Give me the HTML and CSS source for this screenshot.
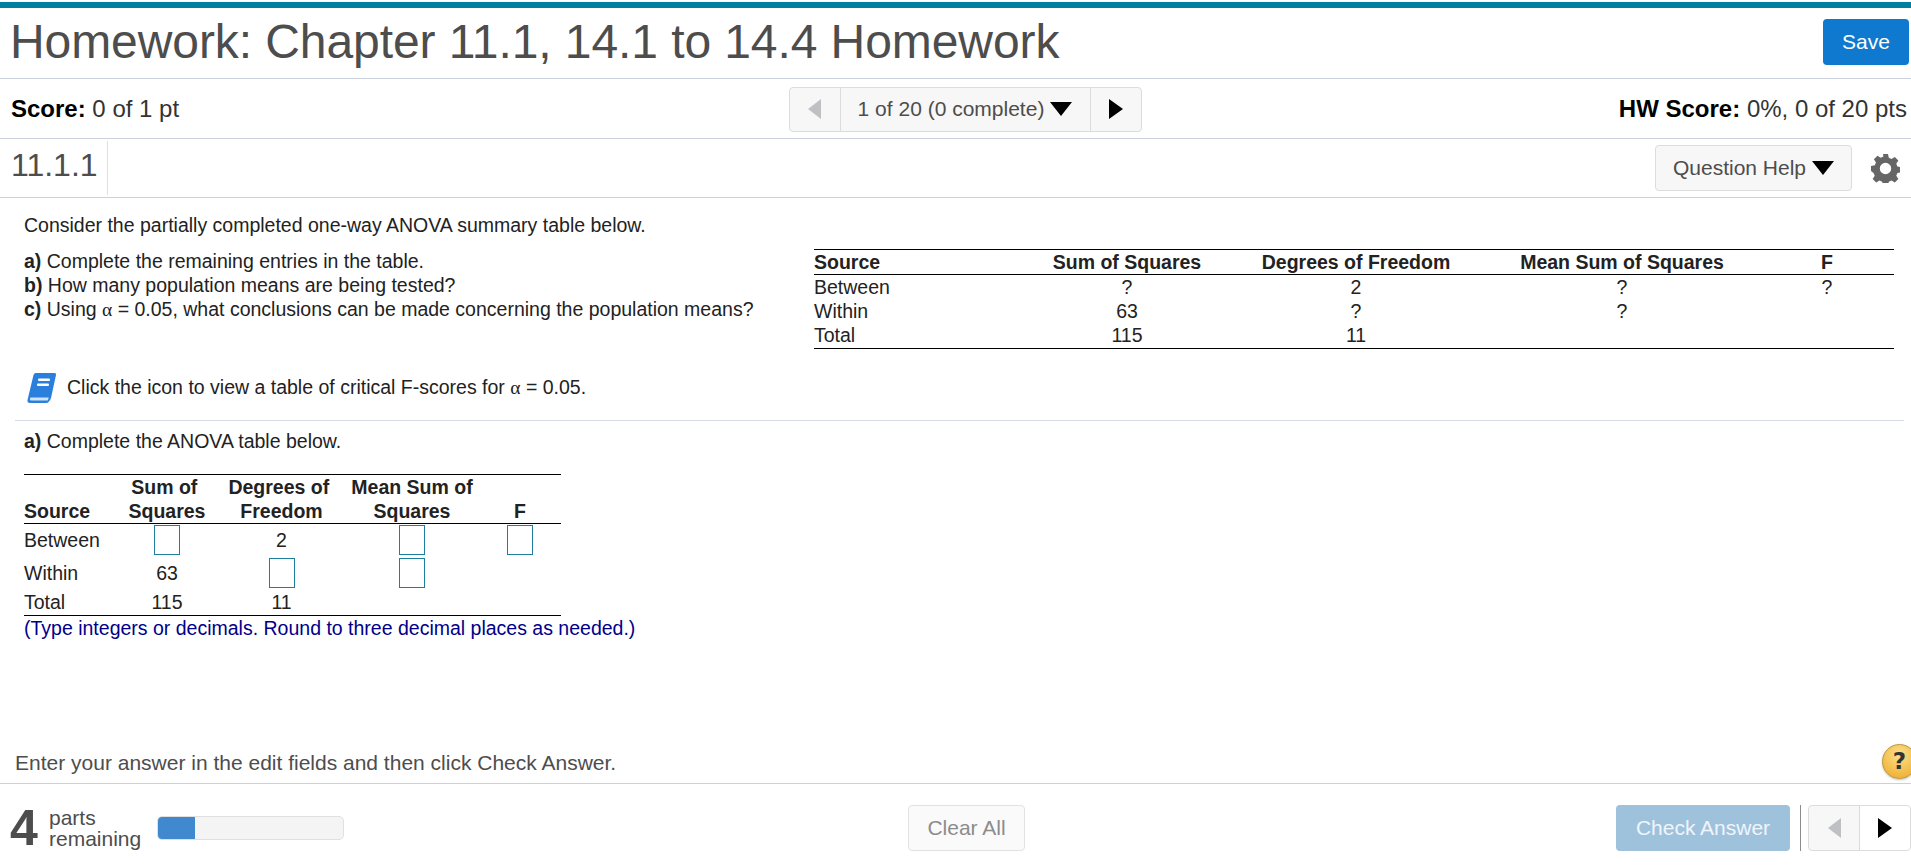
FILE: index.html
```html
<!DOCTYPE html>
<html lang="en">
<head>
<meta charset="utf-8">
<title>Homework</title>
<link rel="stylesheet" href="styles.css">
</head>
<body>
<div class="page">
  <div class="accent"></div>
  <header class="title-row">
    <h1 class="title">Homework: Chapter 11.1, 14.1 to 14.4 Homework</h1>
    <button class="save">Save</button>
  </header>
  <div class="score-row">
    <div class="score"><b>Score:</b> 0 of 1 pt</div>
    <div class="pager main-pager">
      <span class="pager-btn prev"><span class="tri-left"></span></span>
      <span class="pager-mid">1 of 20 (0 complete)<span class="tri-down"></span></span>
      <span class="pager-btn next"><span class="tri-right"></span></span>
    </div>
    <div class="score hw"><b>HW Score:</b> 0%, 0 of 20 pts</div>
  </div>
  <div class="q-row">
    <div class="q-num">11.1.1</div>
    <button class="help">Question Help<span class="tri-down"></span></button>
    <svg class="gear" viewBox="0 0 28 28"><path fill="#666" fill-rule="evenodd" d="M11.6 0h4.800l.8 3.700 2.600 1.100 3.200-2 3.400 3.400-2 3.200 1.100 2.600 3.700.8v4.800l-3.700.8-1.100 2.600 2 3.200-3.400 3.400-3.200-2-2.600 1.100-.8 3.700h-4.800l-.8-3.700-2.600-1.100-3.200 2-3.400-3.400 2-3.200-1.100-2.600L0 16.400v-4.800l3.700-.8 1.100-2.600-2-3.200 3.400-3.400 3.200 2 2.600-1.100zM14 8.500a5.500 5.500 0 1 0 0 11 5.500 5.500 0 0 0 0-11z"/></svg>
  </div>
  <main class="content">
    <div class="prompt">
      <div class="prompt-text">
        <p class="intro">Consider the partially completed one-way ANOVA summary table below.</p>
        <p class="parts"><b>a)</b> Complete the remaining entries in the table.<br><b>b)</b> How many population means are being tested?<br><b>c)</b> Using <span class="alpha">α</span> = 0.05, what conclusions can be made concerning the population means?</p>
      </div>
      <table class="summary">
        <thead><tr><th class="left">Source</th><th>Sum of Squares</th><th>Degrees of Freedom</th><th>Mean Sum of Squares</th><th>F</th></tr></thead>
        <tbody>
          <tr><td class="left">Between</td><td>?</td><td>2</td><td>?</td><td>?</td></tr>
          <tr><td class="left">Within</td><td>63</td><td>?</td><td>?</td><td></td></tr>
          <tr><td class="left">Total</td><td>115</td><td>11</td><td></td><td></td></tr>
        </tbody>
      </table>
    </div>
    <div class="ref">
      <svg class="book" viewBox="0 0 30 30"><path fill="#2a7fdc" d="M6.500 2Q7 0 9 0H27.500Q29.500 0 29 2L24 25Q23.500 27 21.500 29Q21 30 19 30H3Q0 30 .5 27Z"/><path fill="#cfe3f7" d="M3.500 24.500H21.800L20.800 27.500H3.500Q2 26 3.500 24.500Z"/><rect x="11" y="5.500" width="12" height="2.500" rx="1" fill="#fff"/><rect x="10" y="10.500" width="12" height="2.500" rx="1" fill="#fff"/></svg>
      <span>Click the icon to view a table of critical F-scores for <span class="alpha">α</span> = 0.05.</span>
    </div>
    <hr class="rule">
    <p class="sub"><b>a)</b> Complete the ANOVA table below.</p>
    <table class="answer">
      <thead><tr><th class="left">Source</th><th>Sum of&nbsp;<br>Squares</th><th>Degrees of&nbsp;<br>Freedom</th><th>Mean Sum of<br>Squares</th><th>F</th></tr></thead>
      <tbody>
        <tr><td class="left">Between</td><td><span class="box"></span></td><td>2</td><td><span class="box"></span></td><td><span class="box"></span></td></tr>
        <tr><td class="left">Within</td><td>63</td><td><span class="box"></span></td><td><span class="box"></span></td><td></td></tr>
        <tr class="total"><td class="left">Total</td><td>115</td><td>11</td><td></td><td></td></tr>
      </tbody>
    </table>
    <p class="note">(Type integers or decimals. Round to three decimal places as needed.)</p>
  </main>
  <div class="hint-row">
    <span class="hint">Enter your answer in the edit fields and then click Check Answer.</span>
    <span class="qmark">?</span>
  </div>
  <footer class="footer">
    <div class="remaining">
      <span class="count">4</span>
      <span class="rem-label">parts<br>remaining</span>
      <span class="progress"><span class="fill"></span></span>
    </div>
    <button class="clear">Clear All</button>
    <div class="actions">
      <button class="check">Check Answer</button>
      <span class="sep"></span>
      <div class="pager small">
        <span class="pager-btn prev"><span class="tri-left"></span></span>
        <span class="pager-btn next"><span class="tri-right"></span></span>
      </div>
    </div>
  </footer>
</div>
</body>
</html>
```
FILE: styles.css
```css
* { box-sizing: border-box; }
html, body { margin: 0; height: 100%; overflow: hidden; background: #fff; }
body { font-family: "Liberation Sans", Arial, sans-serif; color: #222; }
button { font-family: inherit; cursor: pointer; }
.page { height: 867px; display: flex; flex-direction: column; padding-top: 2px; }
.accent { height: 6px; background: #007fa3; flex: none; }

.title-row { height: 71px; flex: none; display: flex; align-items: center; justify-content: space-between; padding: 0 2px 1px 10px; border-bottom: 1px solid #ccd0dc; }
.title { margin: -2px 0 0; font-size: 48px; font-weight: 400; letter-spacing: -0.08px; color: #4d4d4d; line-height: 1; white-space: nowrap; }
.save { width: 86px; height: 46px; margin-top: -1px; border: 0; padding: 0; border-radius: 4px; background: #0f79cf; color: #fff; font-size: 21px; }

.score-row { height: 60px; flex: none; display: grid; grid-template-columns: 1fr auto 1fr; align-items: center; padding: 1px 4px 0 11px; border-bottom: 1px solid #ccd0dc; }
.score { font-size: 24px; color: #333; white-space: nowrap; }
.score b { color: #000; }
.hw { justify-self: end; }
.pager { display: flex; height: 45px; border: 1px solid #dcdcdc; border-radius: 4px; background: #f7f7f7; }
.main-pager { width: 353px; margin-left: 12px; }
.pager-btn { width: 50px; display: flex; align-items: center; justify-content: center; flex: none; }
.pager-mid { flex: 1; display: flex; align-items: center; justify-content: center; gap: 6px; font-size: 21px; color: #4d4d4d; border-left: 1px solid #dcdcdc; border-right: 1px solid #dcdcdc; white-space: nowrap; }
.tri-left { width: 0; height: 0; border: 10.5px solid transparent; border-left-width: 0; border-right: 13px solid #bfc0c4; }
.tri-right { width: 0; height: 0; border: 10.5px solid transparent; border-right-width: 0; border-left: 14px solid #000; }
.tri-down { display: inline-block; width: 0; height: 0; border: 11px solid transparent; border-bottom-width: 0; border-top: 14px solid #000; }

.q-row { height: 59px; flex: none; display: flex; align-items: center; padding: 0 11px; border-bottom: 1px solid #ccd0dc; }
.q-num { font-size: 32px; color: #4d4d4d; height: 54px; width: 97px; line-height: 48px; margin-right: auto; border-right: 1px solid #dde0e6; }
.help { width: 197px; height: 46px; padding: 0; border: 1px solid #dcdcdc; border-radius: 4px; background: #f7f7f7; color: #4d4d4d; font-size: 21px; display: flex; align-items: center; justify-content: center; gap: 6px; white-space: nowrap; }
.gear { width: 29px; height: 29px; margin-left: 19px; flex: none; }

.content { flex: 1; padding: 15px 7px 0 24px; font-size: 19.5px; color: #222; }
.content p { margin: 0; }
.prompt { display: flex; justify-content: space-between; align-items: flex-start; padding-right: 10px; }
.prompt-text { line-height: 24px; }
.content .intro { margin-bottom: 12px; }
.alpha { font-family: "Liberation Serif", serif; }
table { border-collapse: collapse; text-align: center; }
th { font-weight: 700; }
th, td { padding: 0; }
.left { text-align: left; }
.summary { width: 1080px; margin-top: 36px; border-top: 1px solid #000; border-bottom: 1px solid #000; table-layout: fixed; line-height: 24px; }
.summary thead tr { height: 25px; border-bottom: 1px solid #000; }
.summary tbody tr { height: 24px; }
.summary tbody tr:last-child { height: 25px; }
.summary th:nth-child(1) { width: 212px; }
.summary th:nth-child(2) { width: 202px; }
.summary th:nth-child(3) { width: 256px; }
.summary th:nth-child(4) { width: 276px; }
.ref { display: flex; align-items: center; gap: 10px; margin: 23px 0 0 3px; height: 32px; }
.book { width: 30px; height: 30px; flex: none; }
.rule { height: 1px; margin: 16px 0 0 -9px; border: 0; background: #d5d9e6; }
.content .sub { padding-top: 8px; line-height: 24px; }
.answer { width: 537px; margin-top: 21px; border-top: 1px solid #000; border-bottom: 1px solid #000; table-layout: fixed; line-height: 24px; }
.answer thead tr { height: 49px; border-bottom: 1px solid #000; }
.answer th { vertical-align: bottom; line-height: 24px; }
.answer tbody tr { height: 33px; }
.answer tbody tr.total { height: 26px; }
.answer th:nth-child(1) { width: 92px; }
.answer th:nth-child(2) { width: 102px; }
.answer th:nth-child(3) { width: 127px; }
.answer th:nth-child(4) { width: 134px; }
.box { display: inline-block; width: 26px; height: 30px; border: 1px solid #1c7fa0; vertical-align: middle; }
.content .note { color: #00008b; line-height: 24px; }

.hint-row { height: 37px; flex: none; padding: 0 0 5px 15px; font-size: 21px; color: #4d4d4d; display: flex; align-items: center; justify-content: space-between; border-bottom: 1px solid #ccd0dc; position: relative; }
.qmark { position: absolute; left: 1882px; top: -3px; width: 35px; height: 35px; border-radius: 50%; background: radial-gradient(circle at 50% 30%, #fde08a, #f0b63e 75%, #e2a030); border: 1px solid #c0943a; box-shadow: 0 1px 2px rgba(0,0,0,.25); color: #333; font-family: "DejaVu Sans", sans-serif; font-weight: 700; font-size: 23px; line-height: 32px; text-align: center; }

.footer { height: 83px; flex: none; display: flex; align-items: flex-start; padding: 21px 0 0 10px; }
.remaining { display: flex; align-items: center; width: 898px; height: 46px; }
.count { font-size: 50px; font-weight: 700; color: #4d4d4d; width: 39px; line-height: 46px; }
.rem-label { font-size: 21px; color: #4d4d4d; line-height: 21px; width: 108px; padding-bottom: 1px; }
.progress { width: 187px; height: 24px; border: 1px solid #e0e0e0; border-radius: 5px; background: #f4f4f4; overflow: hidden; margin-top: -1px; }
.fill { display: block; width: 37px; height: 100%; background: #4089cf; }
.clear { width: 117px; height: 46px; padding: 0; border: 1px solid #e2e2e2; border-radius: 4px; background: #fafafa; color: #8c8c8c; font-size: 21px; }
.actions { margin-left: auto; display: flex; }
.check { width: 174px; height: 46px; padding: 0; border: 0; border-radius: 4px; background: #9fc2dc; color: #f0f5fa; font-size: 21px; }
.sep { width: 1px; height: 46px; margin: 0 7px 0 10px; background: #8c8c8c; }
.pager.small { width: 103px; height: 46px; }
.pager.small .pager-btn:first-child { border-right: 1px solid #dcdcdc; width: 51px; }
.pager.small .next { flex: 1; background: #fff; border-radius: 0 4px 4px 0; }
```
